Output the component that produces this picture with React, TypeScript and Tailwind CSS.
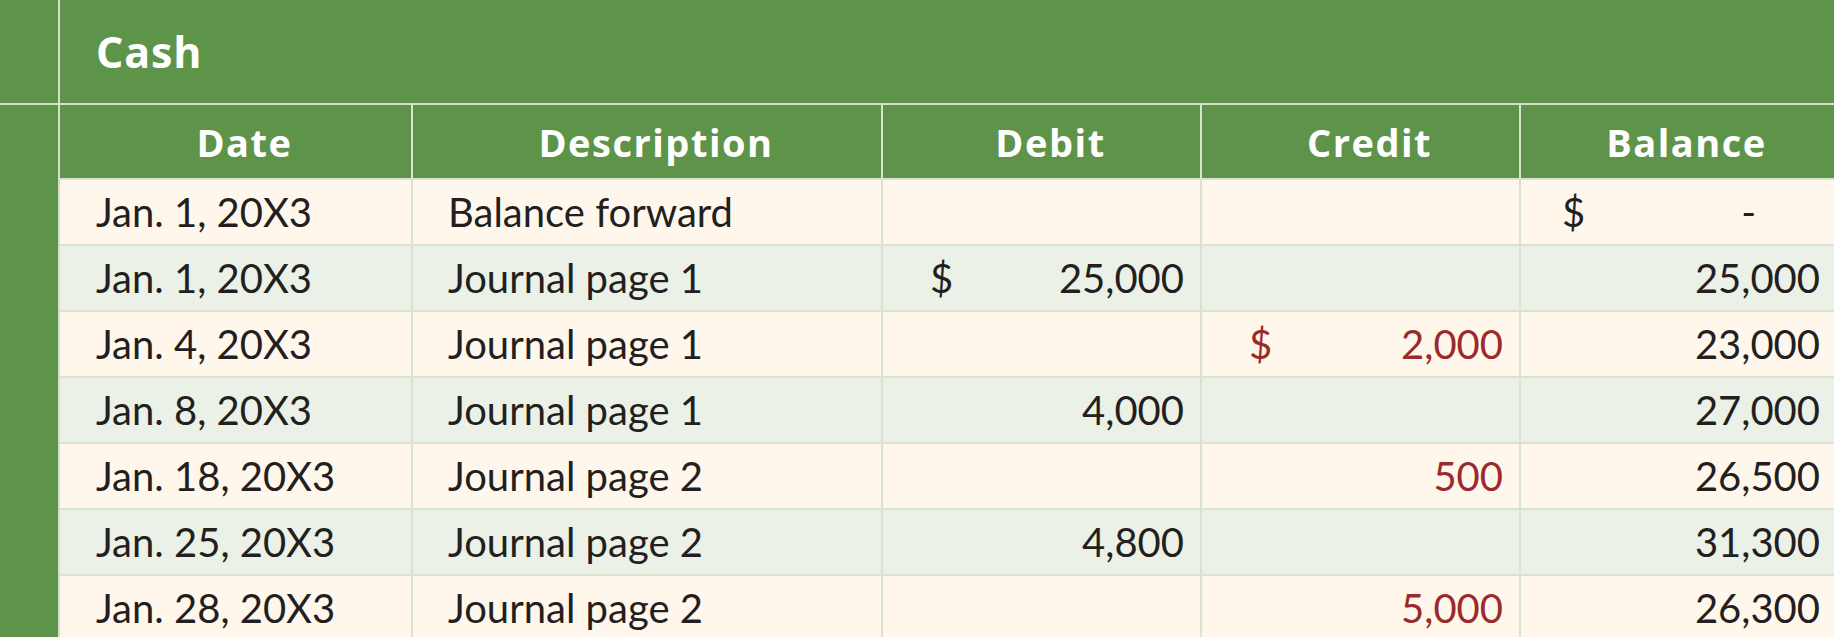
import React from "react";

type Row = {
  date: string;
  desc: string;
  debit?: string;
  debitSign?: boolean;
  credit?: string;
  creditSign?: boolean;
  balance: string;
  balanceSign?: boolean;
};

const rows: Row[] = [
  { date: "Jan. 1, 20X3", desc: "Balance forward", balance: "-", balanceSign: true },
  { date: "Jan. 1, 20X3", desc: "Journal page 1", debit: "25,000", debitSign: true, balance: "25,000" },
  { date: "Jan. 4, 20X3", desc: "Journal page 1", credit: "2,000", creditSign: true, balance: "23,000" },
  { date: "Jan. 8, 20X3", desc: "Journal page 1", debit: "4,000", balance: "27,000" },
  { date: "Jan. 18, 20X3", desc: "Journal page 2", credit: "500", balance: "26,500" },
  { date: "Jan. 25, 20X3", desc: "Journal page 2", debit: "4,800", balance: "31,300" },
  { date: "Jan. 28, 20X3", desc: "Journal page 2", credit: "5,000", balance: "26,300" },
];

const headers = ["Date", "Description", "Debit", "Credit", "Balance"];

const Amount = ({ value, sign, red }: { value?: string; sign?: boolean; red?: boolean }) => (
  <div className={`flex items-center justify-between pl-[47px] pr-[16px] ${red ? "text-[#9b2a2c]" : "text-[#231f20]"}`}>
    <span>{sign ? "$" : ""}</span>
    <span>{value ?? ""}</span>
  </div>
);

export default function App() {
  return (
    <div
      className="w-[1834px] h-[637px] overflow-hidden bg-[#5e9449] text-[40px] leading-none"
      style={{ fontFamily: 'Lato, "Open Sans", sans-serif' }}
    >
      <div className="flex h-[103px]">
        <div className="w-[58px] bg-[#5e9449]" />
        <div className="w-[2px] bg-[#d3e1c9]" />
        <div
          className="flex-1 flex items-center pl-[36px] text-white font-bold text-[43px] tracking-[0.02em]"
          style={{ fontFamily: '"Open Sans", sans-serif' }}
        >
          Cash
        </div>
      </div>
      <div className="h-[2px] bg-[#d3e1c9]" />
      <div className="flex">
        <div className="w-[58px] bg-[#5e9449]" />
        <div className="w-[2px] bg-[#d3e1c9]" />
        <div className="flex-1 grid grid-cols-[351px_468px_317px_317px_1fr] gap-x-[2px] gap-y-[2px] bg-[#d8e4cf]">
          {headers.map((h) => (
            <div
              key={h}
              className="h-[73px] bg-[#5e9449] text-white font-bold text-[38px] tracking-[0.04em] flex items-center justify-center pl-[18px]"
              style={{ fontFamily: '"Open Sans", sans-serif' }}
            >
              {h}
            </div>
          ))}
          {rows.map((r, i) => {
            const bg = i % 2 === 0 ? "bg-[#fff7ec]" : "bg-[#ebf1e6]";
            return (
              <React.Fragment key={i}>
                <div className={`${bg} h-[64px] flex items-center pl-[36px] text-[#231f20]`}>{r.date}</div>
                <div className={`${bg} h-[64px] flex items-center pl-[35px] text-[#231f20]`}>{r.desc}</div>
                <div className={`${bg} h-[64px] flex items-center`}>
                  <div className="w-full">
                    <Amount value={r.debit} sign={r.debitSign} />
                  </div>
                </div>
                <div className={`${bg} h-[64px] flex items-center`}>
                  <div className="w-full">
                    <Amount value={r.credit} sign={r.creditSign} red />
                  </div>
                </div>
                <div className={`${bg} h-[64px] flex items-center`}>
                  {r.balance === "-" ? (
                    <div className="w-full flex items-center justify-between pl-[41px] pr-[78px] text-[#231f20]">
                      <span>$</span>
                      <span>-</span>
                    </div>
                  ) : (
                    <div className="w-full text-right pr-[14px] text-[#231f20]">{r.balance}</div>
                  )}
                </div>
              </React.Fragment>
            );
          })}
        </div>
      </div>
    </div>
  );
}
